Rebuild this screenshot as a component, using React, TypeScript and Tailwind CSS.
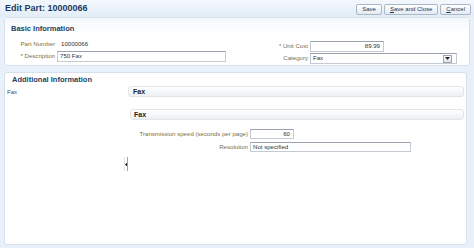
const font = { fontFamily: '"Liberation Sans", Arial, sans-serif' };

function Btn({ children }: { children: React.ReactNode }) {
  return (
    <button className="h-[11px] px-[5px] flex items-center rounded-[2px] border border-[#aab7c5] bg-gradient-to-b from-white to-[#e3eaf2] text-[6px] leading-none text-[#1f3559]">
      {children}
    </button>
  );
}

function Label({ w, children }: { w: string; children: React.ReactNode }) {
  return <div className={`${w} shrink-0 text-right text-[6.1px] leading-none text-[#7d6f45]`}>{children}</div>;
}

export default function App() {
  return (
    <div style={font} className="w-[474px] h-[248px] overflow-hidden bg-[#e8f1fa] flex flex-col">
      {/* title bar */}
      <div className="h-[17px] shrink-0 flex items-center justify-between pl-[5px] pr-[3px] bg-gradient-to-b from-[#f3f8fd] to-[#e2edf8]">
        <div className="text-[9px] font-bold text-[#1e3a5f] leading-none">Edit Part: 10000066</div>
        <div className="flex gap-[2px] pt-[1px]">
          <Btn>Save</Btn>
          <Btn>
            <span className="underline">S</span>ave and Close
          </Btn>
          <Btn>
            <span className="underline">C</span>ancel
          </Btn>
        </div>
      </div>

      {/* Basic Information */}
      <div className="mx-[4px] h-[49px] shrink-0 rounded-[3px] border border-[#d8e0e9] bg-white flex flex-col">
        <div className="pt-[6px] pl-[6px] h-[16px] bg-gradient-to-b from-[#f4f7fa] to-white">
          <div className="text-[7.5px] leading-[9px] font-bold text-[#243f60]">Basic Information</div>
        </div>
        <div className="flex">
          <div className="w-[221px] flex flex-col">
            <div className="mt-[5px] h-[11px] flex items-center gap-[6px]">
              <Label w="w-[50px]">Part Number</Label>
              <div className="text-[6.1px] leading-none text-[#333]">10000066</div>
            </div>
            <div className="mt-[1px] h-[11px] flex items-center gap-[2px]">
              <Label w="w-[50px]">* Description</Label>
              <div className="h-[11px] flex-1 border border-[#c3cad2] border-t-[#9aa3ad] bg-white flex items-center px-[2px] text-[6.1px] leading-none text-[#333]">
                750 Fax
              </div>
            </div>
          </div>
          <div className="flex flex-col">
            <div className="mt-[7px] h-[11px] flex items-center gap-[2px]">
              <Label w="w-[82px]">* Unit Cost</Label>
              <div className="h-[11px] w-[74px] border border-[#c3cad2] border-t-[#9aa3ad] bg-white flex items-center justify-end px-[3px] text-[6.1px] leading-none text-[#333]">
                89.99
              </div>
            </div>
            <div className="mt-[1px] h-[11px] flex items-center gap-[2px]">
              <Label w="w-[82px]">Category</Label>
              <div className="h-[11px] w-[147px] border border-[#c3cad2] border-t-[#9aa3ad] bg-white flex items-center justify-between pl-[2px] pr-[4px] text-[6.1px] leading-none text-[#333]">
                Fax
                <div className="w-[9px] h-[8px] border border-[#9ba4ae] bg-gradient-to-b from-white to-[#dde3ea] flex items-center justify-center">
                  <svg width="5" height="3" viewBox="0 0 5 3">
                    <path d="M0 0h5L2.5 3z" fill="#222" />
                  </svg>
                </div>
              </div>
            </div>
          </div>
        </div>
      </div>

      {/* Additional Information */}
      <div className="mt-[6px] ml-[4px] w-[463px] h-[173px] shrink-0 rounded-[3px] border border-[#d8e0e9] bg-white flex flex-col">
        <div className="pt-[2px] pl-[7px] h-[11px] shrink-0">
          <div className="text-[7.5px] leading-[9px] font-bold text-[#243f60]">Additional Information</div>
        </div>
        <div className="flex flex-1">
          <div className="w-[118px] pl-[2px] pt-[3px]">
            <div className="text-[6.1px] leading-[9px] text-[#2a4f8f]">Fax</div>
          </div>
          <div className="w-[5px] flex items-center justify-center">
            <div className="w-[4px] h-[14px] border-r border-[#9aa3ad] border-l border-l-[#e3e7eb] bg-white flex items-center justify-center">
              <svg width="3" height="5" viewBox="0 0 3 5">
                <path d="M3 0v5L0 2.5z" fill="#111" />
              </svg>
            </div>
          </div>
          <div className="flex-1 pr-[2px] flex flex-col">
            <div className="mt-[2px] h-[11px] rounded-[3px] border border-[#e1e5e9] bg-gradient-to-b from-white to-[#eceff3] flex items-center pl-[4px]">
              <div className="text-[7px] leading-none font-bold text-[#222]">Fax</div>
            </div>
            <div className="ml-[2px] mt-[12px] flex flex-col">
              <div className="h-[11px] rounded-[3px] border border-[#e1e5e9] bg-gradient-to-b from-white to-[#eceff3] flex items-center pl-[3px]">
                <div className="text-[7px] leading-none font-bold text-[#222]">Fax</div>
              </div>
              <div className="mt-[9px] h-[10px] flex items-center gap-[2px]">
                <Label w="w-[118px]">Transmission speed (seconds per page)</Label>
                <div className="h-[10px] w-[44px] border border-[#c3cad2] border-t-[#9aa3ad] bg-white flex items-center justify-end px-[3px] text-[6.1px] leading-none text-[#333]">
                  60
                </div>
              </div>
              <div className="mt-[3px] h-[10px] flex items-center gap-[2px]">
                <Label w="w-[118px]">Resolution</Label>
                <div className="h-[10px] w-[161px] border border-[#c3cad2] border-t-[#9aa3ad] bg-white flex items-center px-[2px] text-[6.1px] leading-none text-[#333]">
                  Not specified
                </div>
              </div>
            </div>
          </div>
        </div>
      </div>
    </div>
  );
}
